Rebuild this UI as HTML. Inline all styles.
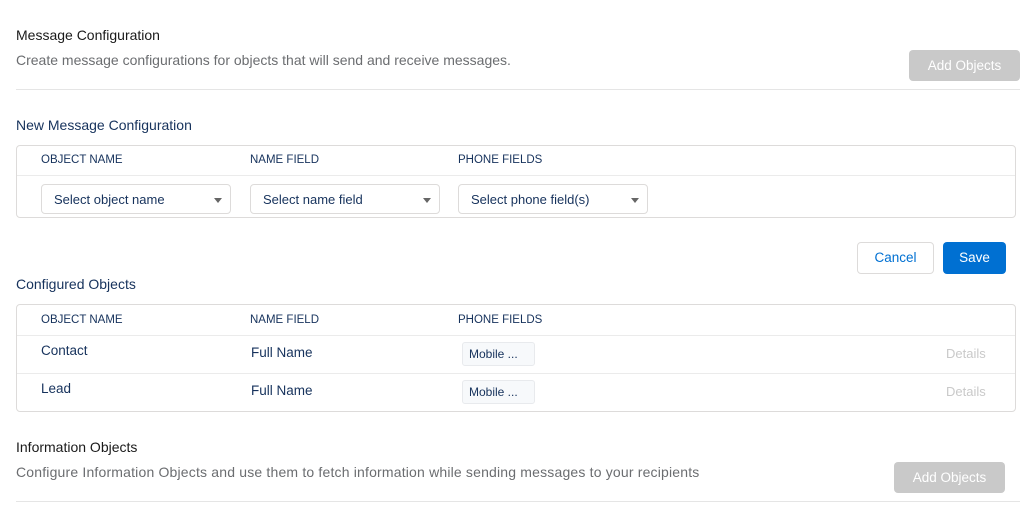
<!DOCTYPE html><html><head><style>
body{margin:0;width:1024px;height:527px;background:#fff;font-family:"Liberation Sans",sans-serif;position:relative;overflow:hidden}
.a{position:absolute;white-space:nowrap}
.t{font-size:14px;color:#1a1a1a}
.s{font-size:14px;color:#6b6d70}
.h{font-size:14px;color:#16325c}
.hd{font-size:11.5px;color:#16325c}
.box{position:absolute;border:1px solid #dddbda;border-radius:4px}
.ln{position:absolute;height:1px;background:#e5e5e5}
.sel{position:absolute;height:30px;border:1px solid #dddbda;border-radius:4px;font-size:13px;color:#16325c;line-height:30px;padding-left:12px;box-sizing:border-box}
.sel:after{content:"";position:absolute;right:8px;top:13px;border:4.5px solid transparent;border-top:5px solid #666;border-bottom:0}
.btn{position:absolute;border-radius:4px;font-size:13.5px;text-align:center;box-sizing:border-box}
.pill{position:absolute;width:73px;height:24px;background:#f7f9fb;border:1px solid #e8eaed;border-radius:3px;box-sizing:border-box;font-size:12px;color:#16325c;line-height:22px;padding-left:6px}
.v{font-size:13.5px;color:#16325c}
.d{font-size:13px;color:#c9c9c9}
</style></head><body>
<div class="a t" style="left:16px;top:27px">Message Configuration</div>
<div class="a s" style="left:16px;top:52px">Create message configurations for objects that will send and receive messages.</div>
<div class="btn" style="left:909px;top:50px;width:111px;height:31px;background:#c9c9c9;color:#fff;line-height:31px">Add Objects</div>
<div class="ln" style="left:16px;top:89px;width:1004px"></div>
<div class="a h" style="left:16px;top:117px">New Message Configuration</div>
<div class="box" style="left:16px;top:145px;width:998px;height:71px"></div>
<div class="ln" style="left:17px;top:175px;width:998px;background:#ebebeb"></div>
<div class="a hd" style="left:41px;top:154px">OBJECT NAME</div>
<div class="a hd" style="left:250px;top:154px">NAME FIELD</div>
<div class="a hd" style="left:458px;top:154px">PHONE FIELDS</div>
<div class="sel" style="left:41px;top:184px;width:190px">Select object name</div>
<div class="sel" style="left:250px;top:184px;width:190px">Select name field</div>
<div class="sel" style="left:458px;top:184px;width:190px">Select phone field(s)</div>
<div class="btn" style="left:857px;top:242px;width:77px;height:32px;border:1px solid #dddbda;color:#0070d2;line-height:30px">Cancel</div>
<div class="btn" style="left:943px;top:242px;width:63px;height:32px;background:#0070d2;color:#fff;line-height:32px">Save</div>
<div class="a h" style="left:16px;top:276px">Configured Objects</div>
<div class="box" style="left:16px;top:304px;width:998px;height:106px"></div>
<div class="ln" style="left:17px;top:335px;width:998px;background:#ebebeb"></div>
<div class="ln" style="left:17px;top:373px;width:998px;background:#ebebeb"></div>
<div class="a hd" style="left:41px;top:314px">OBJECT NAME</div>
<div class="a hd" style="left:250px;top:314px">NAME FIELD</div>
<div class="a hd" style="left:458px;top:314px">PHONE FIELDS</div>
<div class="a v" style="left:41px;top:343px">Contact</div>
<div class="a v" style="left:251px;top:345px">Full Name</div>
<div class="pill" style="left:462px;top:342px">Mobile ...</div>
<div class="a d" style="left:946px;top:346px">Details</div>
<div class="a v" style="left:41px;top:381px">Lead</div>
<div class="a v" style="left:251px;top:383px">Full Name</div>
<div class="pill" style="left:462px;top:380px">Mobile ...</div>
<div class="a d" style="left:946px;top:384px">Details</div>
<div class="a t" style="left:16px;top:439px">Information Objects</div>
<div class="a s" style="left:16px;top:464px;letter-spacing:0.18px">Configure Information Objects and use them to fetch information while sending messages to your recipients</div>
<div class="btn" style="left:894px;top:462px;width:111px;height:31px;background:#c9c9c9;color:#fff;line-height:31px">Add Objects</div>
<div class="ln" style="left:16px;top:501px;width:1004px"></div>
</body></html>
